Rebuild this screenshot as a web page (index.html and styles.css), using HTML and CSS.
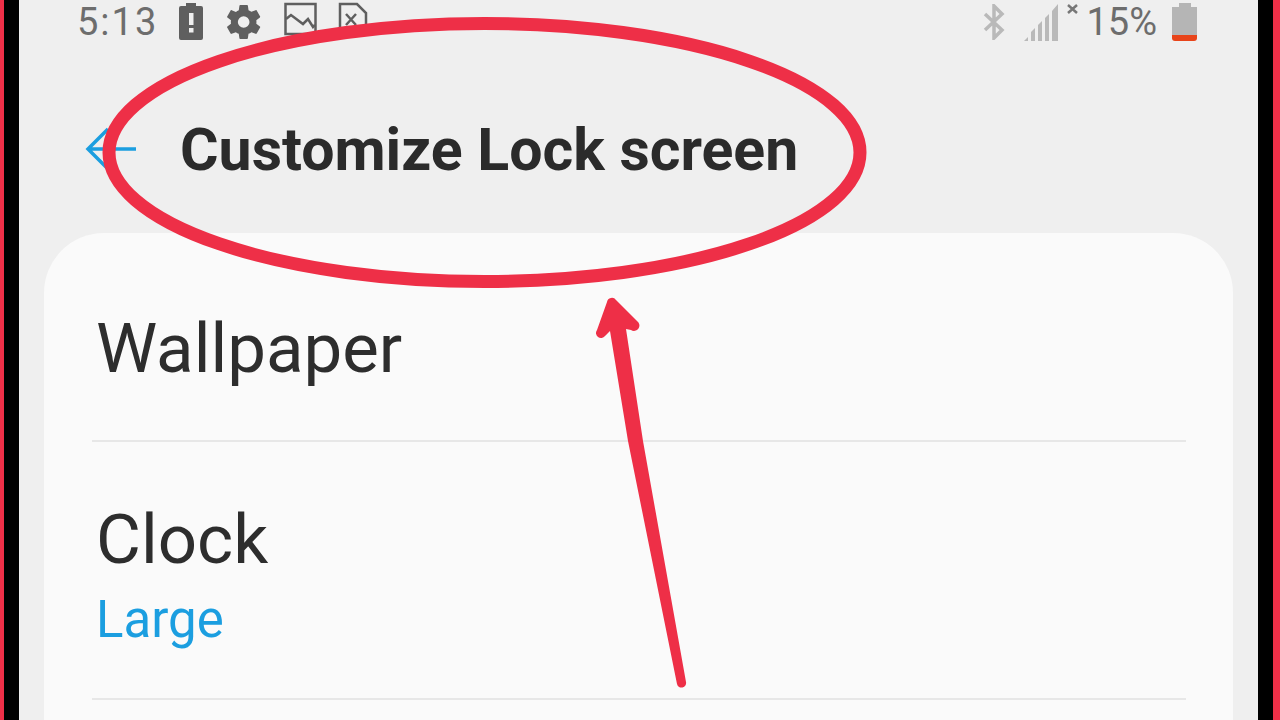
FILE: index.html
```html
<!DOCTYPE html>
<html lang="en">
<head>
    <meta charset="UTF-8">
    <title>Customize Lock screen</title>
    <link rel="stylesheet" href="styles.css">
</head>
<body>
    <div class="frame">
        <div class="screen">
            <div class="status-bar">
                <div class="status-group">
                    <span class="time">5:13</span>
                    <svg class="icon-alert" width="26" height="38" viewBox="0 0 26 38">
                        <path fill="#5f5f5f" d="M8 0h10v3h5a2 2 0 0 1 2 2v30a2 2 0 0 1-2 2H3a2 2 0 0 1-2-2V5a2 2 0 0 1 2-2h5z"/>
                        <rect x="11" y="10" width="4.500" height="12" fill="#efefef"/>
                        <rect x="11" y="25" width="4.500" height="4.500" fill="#efefef"/>
                    </svg>
                    <svg class="icon-gear" width="40" height="40" viewBox="0 0 24 24">
                        <path fill="#5f5f5f" d="M19.400 13c.04-.32.060-.66.060-1s-.02-.68-.07-1l2.160-1.680c.2-.15.250-.430.130-.650l-2.050-3.540c-.13-.23-.4-.3-.630-.23l-2.550 1.020a7.500 7.500 0 0 0-1.730-1l-.380-2.710A.5.500 0 0 0 13.840 1.800H9.760a.5.500 0 0 0-.5.420l-.38 2.710c-.62.260-1.200.6-1.730 1L4.600 4.900c-.23-.08-.5 0-.630.230L1.920 8.670c-.13.230-.08.500.120.650L4.200 11c-.05.320-.08.670-.08 1s.02.680.07 1l-2.160 1.680c-.2.150-.25.430-.13.650l2.050 3.540c.13.230.4.300.63.230l2.550-1.020c.53.400 1.110.740 1.730 1l.38 2.710c.05.240.25.420.5.420h4.080c.25 0 .46-.18.500-.42l.38-2.710c.62-.26 1.200-.6 1.730-1l2.550 1.020c.23.080.5 0 .63-.23l2.050-3.540c.13-.23.080-.5-.12-.65zM11.800 15.500a3.500 3.500 0 1 1 0-7 3.500 3.500 0 0 1 0 7z"/>
                    </svg>
                    <svg class="icon-image" width="34" height="34" viewBox="0 0 34 34">
                        <rect x="1.500" y="2" width="30" height="30" fill="none" stroke="#5f5f5f" stroke-width="2.500"/>
                        <path fill="none" stroke="#5f5f5f" stroke-width="2.500" d="M2 17l5-4 12 9 5-5 5 8 2-2"/>
                    </svg>
                    <svg class="icon-file" width="30" height="34" viewBox="0 0 30 34">
                        <path fill="none" stroke="#5f5f5f" stroke-width="2.500" d="M2 2h17l9 9v22H2z"/>
                        <path fill="none" stroke="#5f5f5f" stroke-width="2.500" d="M8 12l10 11M18 12L8 23"/>
                    </svg>
                </div>
                <div class="status-group status-right">
                    <svg class="icon-bt" width="22" height="36" viewBox="0 0 22 36">
                        <path fill="none" stroke="#b9b9b9" stroke-width="3.500" d="M2 10l17 16-8 8V2l8 8L2 26"/>
                    </svg>
                    <svg class="icon-signal" width="57" height="38" viewBox="0 0 57 38">
                        <path fill="#b9b9b9" d="M0 38l4-4v4zM7 38v-9l4-4v13zM14 38V22l4-4v20zM21 38V15l4-4v27zM28 38V8l6-7v37z"/>
                        <path fill="none" stroke="#777" stroke-width="2.500" d="M44 2l9 8M53 2l-9 8"/>
                    </svg>
                    <span class="battery-text">15%</span>
                    <div class="battery">
                        <div class="battery-cap"></div>
                        <div class="battery-body"></div>
                        <div class="battery-low"></div>
                    </div>
                </div>
            </div>

            <div class="app-bar">
                <svg class="back" width="52" height="44" viewBox="0 0 52 44">
                    <path fill="none" stroke="#1b9ee0" stroke-width="3.500" d="M51 22H3M23 2L3 22l20 20"/>
                </svg>
                <h1 class="title">Customize Lock screen</h1>
            </div>

            <div class="card">
                <div class="row row-wallpaper">
                    <div class="row-title">Wallpaper</div>
                </div>
                <div class="row row-clock">
                    <div class="row-title">Clock</div>
                    <div class="row-sub">Large</div>
                </div>
            </div>
        </div>
    </div>

    <!-- red marker drawn on top of the screenshot -->
    <svg class="marker" width="1280" height="720" viewBox="0 0 1280 720">
        <ellipse cx="484.500" cy="152.500" rx="375.500" ry="129" fill="none" stroke="#ee2f47" stroke-width="13"/>
        <path fill="#ee2f47" d="M677 684L628 441 610 331l-5 5a5 5 0 0 1-8-6l10-28a5 5 0 0 1 9-2l21 21a5 5 0 0 1-6 9l-5-1 17 112 43 241a4.500 4.500 0 0 1-9 2z"/>
    </svg>
</body>
</html>
```

FILE: styles.css
```css
html, body {
    margin: 0;
    height: 100%;
    overflow: hidden;
}
body {
    background: #000;
    font-family: 'Roboto', sans-serif;
    position: relative;
}
.frame {
    width: 1280px;
    height: 720px;
    box-sizing: border-box;
    padding: 0 15px;
    background: #000;
    border-left: 4px solid #ee2f47;
    border-right: 7px solid #ee2f47;
}
.screen {
    height: 100%;
    background: #efefef;
    overflow: hidden;
}
.status-bar {
    height: 44px;
    display: flex;
    justify-content: space-between;
    align-items: center;
    padding: 0 61px 0 58px;
}
.status-group {
    display: flex;
    align-items: center;
    gap: 20px;
}
.time {
    font-size: 38px;
    line-height: 44px;
    letter-spacing: 2px;
    color: #6d6d6d;
}
.icon-image, .icon-file {
    margin-bottom: 6px;
}
.battery-text {
    font-size: 38px;
    line-height: 44px;
    color: #6d6d6d;
    margin-left: 5px;
}
.status-right {
    gap: 0;
}
.icon-signal {
    margin-left: 19px;
}
.battery {
    width: 25px;
    height: 38px;
    margin-left: 15px;
    display: flex;
    flex-direction: column;
    align-items: center;
}
.battery-cap {
    width: 12px;
    height: 4px;
    background: #b5b5b5;
}
.battery-body {
    width: 25px;
    flex: 1;
    background: #b5b5b5;
}
.battery-low {
    width: 25px;
    height: 6px;
    background: #e8441a;
    border-radius: 0 0 3px 3px;
}
.app-bar {
    height: 189px;
    display: flex;
    align-items: center;
    box-sizing: border-box;
    padding: 21px 0 0 66px;
    gap: 43px;
}
.title {
    margin: 0;
    font-size: 59px;
    font-weight: 700;
    color: #2b2b2b;
}
.card {
    margin: 0 25px;
    height: 560px;
    background: #fafafa;
    border-radius: 60px 60px 0 0;
    padding: 0 47px 0 48px;
}
.row {
    border-bottom: 2px solid #e7e7e7;
    box-sizing: border-box;
}
.row-wallpaper {
    height: 209px;
    padding: 80px 0 0 4px;
}
.row-clock {
    height: 258px;
    padding: 62px 0 0 4px;
}
.row-title {
    font-size: 69px;
    line-height: 72px;
    color: #2d2d2d;
}
.row-sub {
    font-size: 51px;
    line-height: 52px;
    margin-top: 18px;
    color: #1b9ee0;
}
.marker {
    position: absolute;
    left: 0;
    top: 0;
}
```
